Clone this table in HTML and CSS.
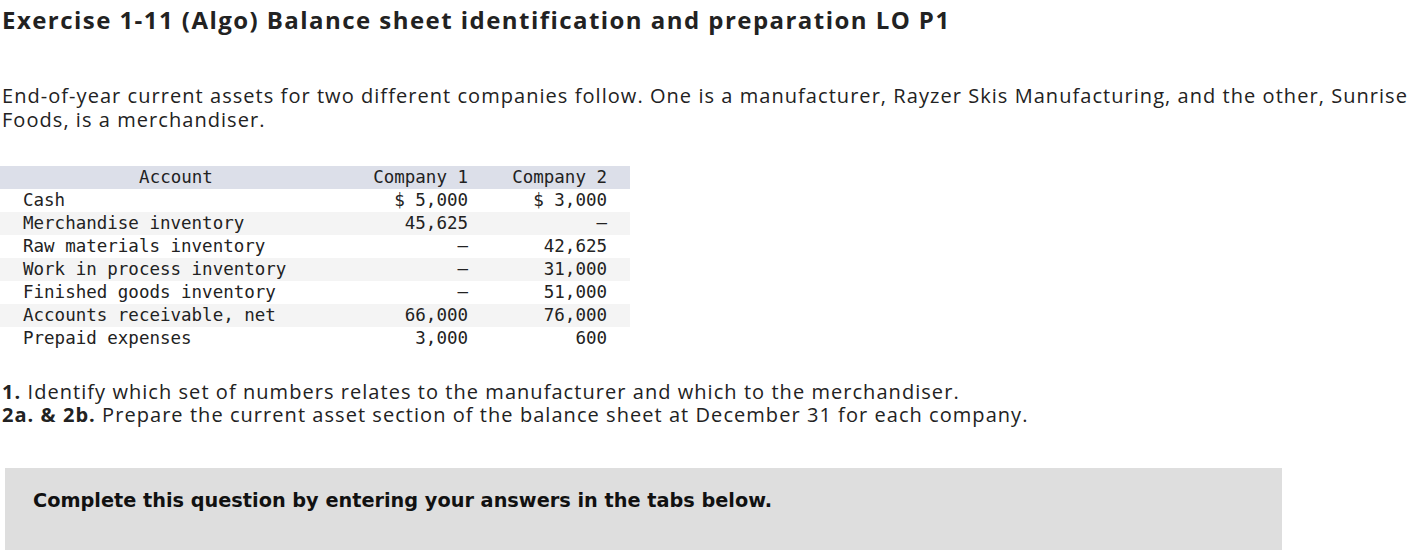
FILE: index.html
```html
<!DOCTYPE html>
<html>
<head>
<meta charset="utf-8">
<link rel="stylesheet" href="styles.css">
</head>
<body>
<h1 class="title">Exercise 1-11 (Algo) Balance sheet identification and preparation LO P1</h1>
<p class="intro">End-of-year current assets for two different companies follow. One is a manufacturer, Rayzer Skis Manufacturing, and the other, Sunrise Foods, is a merchandiser.</p>
<table class="data">
  <thead>
    <tr><th class="acct-h">Account</th><th class="num">Company 1</th><th class="num">Company 2</th></tr>
  </thead>
  <tbody>
    <tr><td class="acct">Cash</td><td class="num">$ 5,000</td><td class="num">$ 3,000</td></tr>
    <tr class="alt"><td class="acct">Merchandise inventory</td><td class="num">45,625</td><td class="num">&ndash;</td></tr>
    <tr><td class="acct">Raw materials inventory</td><td class="num">&ndash;</td><td class="num">42,625</td></tr>
    <tr class="alt"><td class="acct">Work in process inventory</td><td class="num">&ndash;</td><td class="num">31,000</td></tr>
    <tr><td class="acct">Finished goods inventory</td><td class="num">&ndash;</td><td class="num">51,000</td></tr>
    <tr class="alt"><td class="acct">Accounts receivable, net</td><td class="num">66,000</td><td class="num">76,000</td></tr>
    <tr><td class="acct">Prepaid expenses</td><td class="num">3,000</td><td class="num">600</td></tr>
  </tbody>
</table>
<div class="tasks">
  <p><b>1.</b> Identify which set of numbers relates to the manufacturer and which to the merchandiser.</p>
  <p><b>2a. &amp; 2b.</b> Prepare the current asset section of the balance sheet at December 31 for each company.</p>
</div>
<div class="note"><p>Complete this question by entering your answers in the tabs below.</p></div>
</body>
</html>
```
FILE: styles.css
```css
html, body { margin: 0; padding: 0; background: #fff; }
body { color: #222; font-family: "Open Sans", sans-serif; padding-left: 2px; }
.title { font-family: "Open Sans", sans-serif; font-weight: 700; font-size: 24px; letter-spacing: 1.45px; line-height: 30px; margin: 5px 0 0 0; color: #222; }
.intro { font-size: 20px; letter-spacing: 1.05px; line-height: 24px; margin: 49px 0 0 0; color: #222; max-width: 1420px; }
.data { border-collapse: collapse; margin: 34px 0 0 -2px; font-family: "DejaVu Sans Mono", monospace; font-size: 17.5px; color: #222; }
.data th, .data td { height: 23px; padding: 0; line-height: 23px; font-weight: normal; white-space: nowrap; }
.data thead tr { background: #dcdfe9; }
.data .acct-h { width: 352px; text-align: center; }
.data .acct { padding-left: 23px; text-align: left; }
.data .num { width: 116px; padding-right: 23px; text-align: right; }
.data tr.alt { background: #f4f4f4; }
.tasks { margin-top: 30px; font-size: 20px; letter-spacing: 1.05px; line-height: 23px; }
.tasks p { margin: 0; }
.tasks b { font-weight: 700; }
.note { background: #dedede; margin: 42px 0 0 3px; width: 1277px; height: 90px; box-sizing: border-box; padding: 21px 0 0 28px; }
.note p { margin: 0; font-family: "DejaVu Sans", Verdana, sans-serif; font-weight: bold; font-size: 19.3px; line-height: 24px; color: #111; }
```
